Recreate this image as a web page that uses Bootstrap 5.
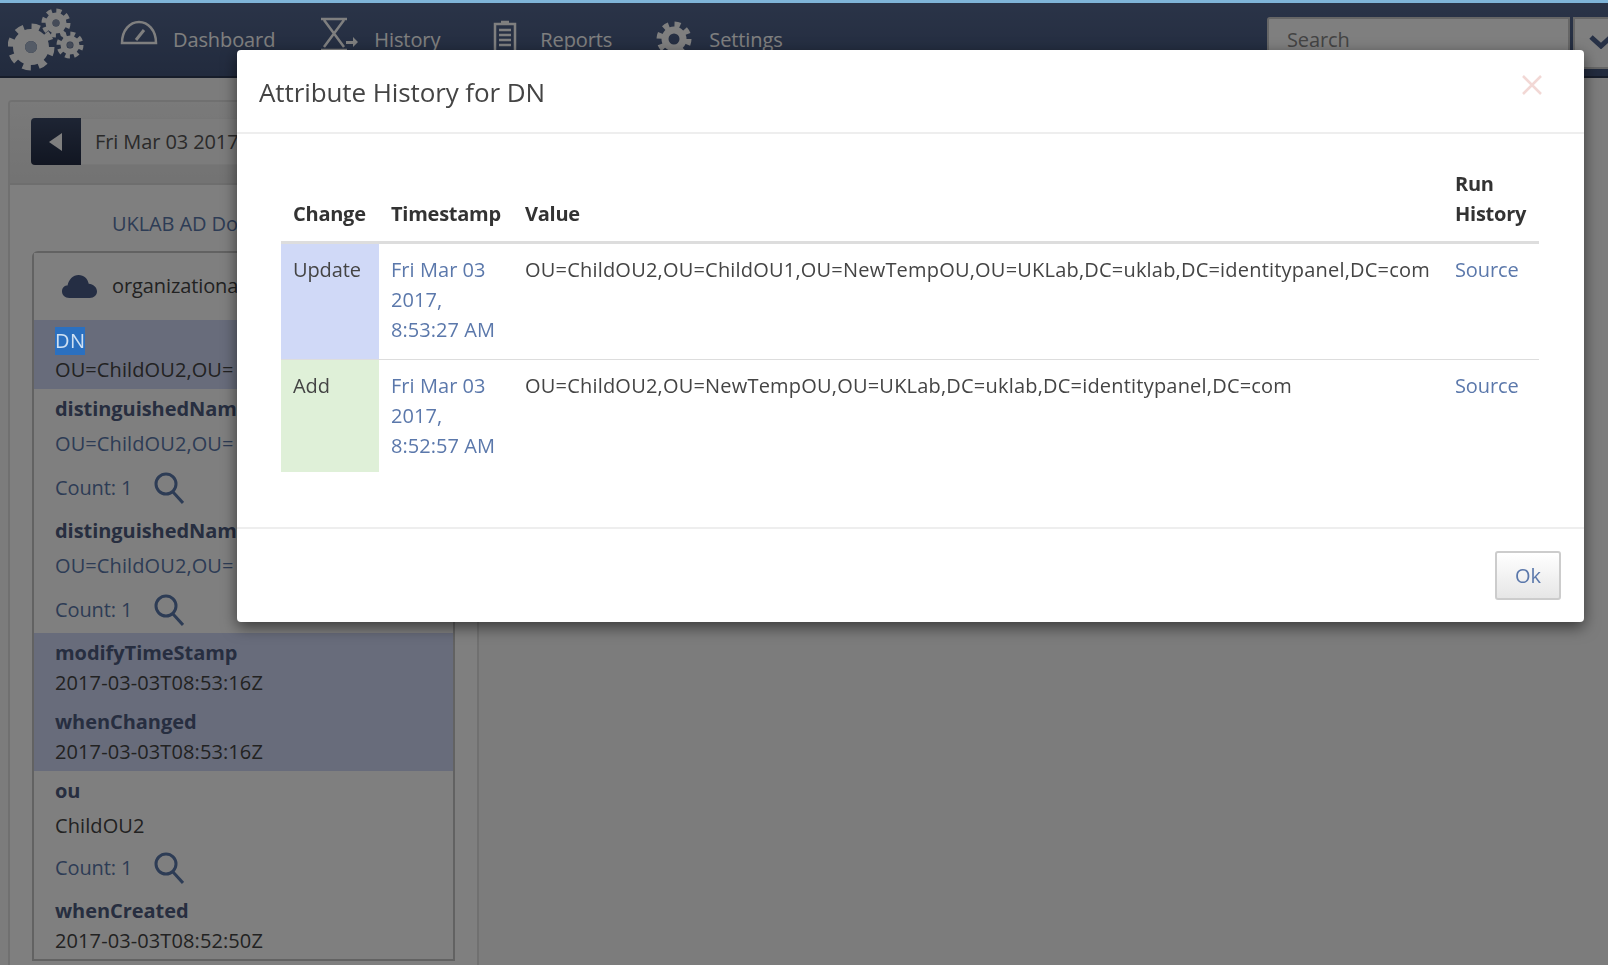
<!DOCTYPE html>
<html lang="en">
<head>
<meta charset="utf-8">
<title>Attribute History</title>
<link rel="stylesheet" href="https://cdn.jsdelivr.net/npm/bootstrap@5.3.0/dist/css/bootstrap.min.css">
<style>
html,body{height:965px;overflow:hidden}
body{font-family:"Open Sans","Liberation Sans",sans-serif;font-size:20px;line-height:30px;color:#444;background:#f8f8f8;letter-spacing:-.1px}
a{color:#5b78ab;text-decoration:none}
.top-strip{height:3px;background:#7fb4d8;position:relative;z-index:1060}
.app-bar{height:75px;background:linear-gradient(#556890,#44567c);border-bottom:2px solid #2e3a55;padding-left:8px;color:#fff}
.app-logo{width:76px;height:64px;margin-right:36px;margin-top:5px}
.app-link{color:#fff;display:flex;align-items:flex-start;height:60px;padding-top:22px}
.app-ico{flex:none;margin-right:15px;margin-top:-5px}
.search-box{position:absolute;left:1267px;top:14px;width:303px;height:52px;background:#fff;border:2px solid #ccc;border-radius:3px 0 0 3px;padding:6px 18px;color:#888}
.search-drop{position:absolute;left:1573px;top:14px;width:35px;height:52px;background:#fff;border:2px solid #ccc;border-right:0}
.main-area{padding:22px 0 0 8px}
.side-panel{width:471px;height:865px;background:#fff;border:2px solid #e0e0e0;border-bottom:0;border-radius:4px 4px 0 0;overflow:hidden}
.date-band{height:83px;background:linear-gradient(#f4f4f4,#e6e6e6);border-bottom:2px solid #ddd;padding:16px 21px}
.back-btn{width:50px;height:47px;background:linear-gradient(#3c4a68,#232c44);border:0;border-radius:4px 0 0 4px;padding:0}
.date-field{width:300px;height:47px;background:#f8f8f8;padding:8px 14px;color:#555;border:1px solid #eee;border-left:0;white-space:nowrap}
.dom-link{padding:24px 0 0 102px;height:66px;white-space:nowrap}
.obj-box{margin-left:22px;width:423px;border:2px solid #c4c4c4;border-bottom:0;border-radius:6px 6px 0 0}
.obj-head{height:67px;padding:18px 0 0 28px;background:#fff;white-space:nowrap}
.obj-head svg{margin-right:15px;margin-top:4px;vertical-align:top}
.attr-row{padding:5px 21px 4px;overflow:hidden;white-space:nowrap}
.attr-row.is-changed{background:#d0d9f7}
.attr-row.has-count{padding-bottom:8px}
.attr-row.tail{border-bottom:2px solid #c4c4c4;padding-bottom:3px}
.attr-name{font-weight:700;color:#4e5c80;letter-spacing:-.05px}
.attr-gap{margin-top:5px}
.attr-stamp{letter-spacing:.1px}
.attr-count{margin-top:14px;color:#5b78ab;height:30px;display:flex;align-items:center}
.attr-count.count-tight{margin-top:12px}
.attr-count svg{margin-left:22px}
.sel-wrap{height:30px;padding-top:2px;line-height:28px}
.sel-text{position:relative;z-index:1051;background:#2b70c0;color:#cfe0f2;display:inline-block;height:28px;line-height:28px;letter-spacing:.4px}
.modal-backdrop{top:3px;height:962px}
.hist-dialog{width:1347px;max-width:none;margin:50px 0 0 237px}
.hist-dialog .modal-content{border:0;border-radius:4px;box-shadow:0 5px 15px rgba(0,0,0,.55);height:572px}
.hist-dialog .modal-header{height:84px;padding:24px 22px;border-bottom:2px solid #eee;align-items:flex-start}
.hist-title{font-size:26px;line-height:36px;font-weight:400;color:#444;letter-spacing:-.1px;margin:0}
.hist-close{border:0;background:none;padding:0;position:absolute;left:1285px;top:25px;line-height:0}
.hist-dialog .modal-body{padding:30px 45px 0 44px;flex:none;height:393px}
.hist-table{table-layout:fixed;width:1258px;margin:0;--bs-table-color:#444;--bs-table-border-color:#ddd}
.hist-table th,.hist-table td{padding:11px 12px;line-height:30px}
.hist-table thead th{vertical-align:bottom;border-bottom:3px solid #ddd;color:#333;padding:5px 12px 12px;letter-spacing:-.25px}
.hist-table tbody td{border-bottom:1px solid #ddd}
.hist-table tbody tr:first-child td{padding-bottom:14px}
.hist-table tbody tr:last-child td{border-bottom:0}
.cw1{width:98px}.cw2{width:134px}.cw3{width:930px}.cw4{width:96px}
td.cell-update{--bs-table-bg:#d0d9f7;background:#d0d9f7}
td.cell-add{--bs-table-bg:#dff0d8;background:#dff0d8}
td.cell-stamp a{letter-spacing:.05px}
.hist-table td.cell-value{letter-spacing:.2px}
.hist-dialog .modal-footer{height:95px;padding:22px 23px;border-top:2px solid #eee;align-items:flex-start}
.ok-btn{width:66px;height:49px;margin:0;padding:0;background:linear-gradient(#fff,#e6e6e6);border:2px solid #ccc;border-radius:3px;color:#5b78ab;font-size:20px;letter-spacing:-.1px}
</style>
</head>
<body>
<div class="top-strip"></div>
<header class="app-bar d-flex align-items-start position-relative">
  <svg class="app-logo" viewBox="0 0 76 64" aria-hidden="true">
    <g fill="none" stroke="#fff">
      <circle cx="23" cy="39" r="20" stroke-width="7" stroke-dasharray="8 7.7"/>
      <circle cx="23" cy="39" r="12" stroke-width="12"/>
      <circle cx="48" cy="15" r="12" stroke-width="5" stroke-dasharray="5 4.42"/>
      <circle cx="48" cy="15" r="7" stroke-width="7"/>
      <circle cx="62" cy="37" r="11" stroke-width="5" stroke-dasharray="4.6 4.04"/>
      <circle cx="62" cy="37" r="6.5" stroke-width="6"/>
    </g>
    <circle cx="23" cy="39" r="6" fill="#a9b7cc"/>
    <circle cx="48" cy="15" r="3.5" fill="#8a97b0"/>
    <circle cx="62" cy="37" r="3" fill="#8a97b0"/>
  </svg>
  <nav class="d-flex">
    <a class="app-link" href="#" style="margin-right:45px">
      <svg class="app-ico" width="38" height="26" viewBox="0 0 38 26" fill="none" stroke="#fff" stroke-width="2.5"><path d="M2 23 C2 10 10 2 19 2 C28 2 36 10 36 23 Z"/><path d="M16 20 L24 10" stroke-width="3"/></svg>
      Dashboard</a>
    <a class="app-link" href="#" style="margin-right:53px">
      <svg class="app-ico" width="38" height="36" viewBox="0 0 38 36" fill="none" stroke="#fff" stroke-width="2.5" style="margin-top:-8px;margin-right:16px"><path d="M1 2 H27 M4 3 L24 30 M24 3 L4 30 M1 33 H27"/><path d="M26 24 H33 V20 L38 25 L33 30 V27 H26 Z" fill="#fff" stroke="none"/></svg>
      History</a>
    <a class="app-link" href="#" style="margin-right:44px">
      <svg class="app-ico" width="24" height="34" viewBox="0 0 24 34" fill="none" stroke="#fff" stroke-width="2.5" style="margin-top:-5px;margin-right:23px"><rect x="2" y="4" width="20" height="28"/><path d="M8 2 H16 M6 10 H18 M6 15 H18 M6 20 H18 M6 25 H18"/></svg>
      Reports</a>
    <a class="app-link" href="#">
      <svg class="app-ico" width="36" height="36" viewBox="0 0 36 36" fill="none" stroke="#fff" style="margin-top:-4px;margin-right:17px"><circle cx="18" cy="18" r="14.5" stroke-width="6" stroke-dasharray="5.7 5.7"/><circle cx="18" cy="18" r="9" stroke-width="7"/></svg>
      Settings</a>
  </nav>
  <div class="search-box">Search</div>
  <div class="search-drop"><svg width="24" height="14" viewBox="0 0 24 14" fill="none" stroke="#4f628c" stroke-width="5" style="margin:16px 0 0 14px;display:block"><path d="M2 2 L12 11 L24 0"/></svg></div>
</header>
<main class="main-area">
  <div class="side-panel">
    <div class="date-band d-flex">
      <button class="back-btn d-flex align-items-center justify-content-center" type="button" aria-label="Previous"><svg width="14" height="18" viewBox="0 0 14 18"><path d="M13 0 V18 L0 9 Z" fill="#fff"/></svg></button>
      <div class="date-field">Fri Mar 03 2017</div>
    </div>
    <div class="dom-link"><a href="#">UKLAB AD Domain</a></div>
    <div class="obj-box">
      <div class="obj-head">
        <svg width="35" height="23" viewBox="0 0 38 24" preserveAspectRatio="none"><path d="M8 24 C3 24 0 21 0 17 C0 13 3 11 6 11 C7 5 12 0 18 0 C24 0 28 4 29 9 C34 9 38 13 38 17 C38 21 35 24 30 24 Z" fill="#4a5c88"/></svg>organizationalUnit
      </div>
      <div class="attr-row is-changed"><div class="sel-wrap"><span class="sel-text">DN</span></div><div class="attr-stamp">OU=ChildOU2,OU=</div></div>
      <div class="attr-row has-count"><div class="attr-name">distinguishedName</div><div class="attr-gap attr-stamp"><a href="#">OU=ChildOU2,OU=</a></div>
        <div class="attr-count">Count: 1 <svg width="30" height="32" viewBox="0 0 30 32" fill="none" stroke="#5b78ab" stroke-width="3"><circle cx="12" cy="12" r="10"/><path d="M19 20 L29 31"/></svg></div></div>
      <div class="attr-row has-count"><div class="attr-name">distinguishedName</div><div class="attr-gap attr-stamp"><a href="#">OU=ChildOU2,OU=</a></div>
        <div class="attr-count">Count: 1 <svg width="30" height="32" viewBox="0 0 30 32" fill="none" stroke="#5b78ab" stroke-width="3"><circle cx="12" cy="12" r="10"/><path d="M19 20 L29 31"/></svg></div></div>
      <div class="attr-row is-changed"><div class="attr-name">modifyTimeStamp</div><div class="attr-stamp">2017-03-03T08:53:16Z</div></div>
      <div class="attr-row is-changed"><div class="attr-name">whenChanged</div><div class="attr-stamp">2017-03-03T08:53:16Z</div></div>
      <div class="attr-row has-count"><div class="attr-name">ou</div><div class="attr-gap attr-stamp">ChildOU2</div>
        <div class="attr-count count-tight">Count: 1 <svg width="30" height="32" viewBox="0 0 30 32" fill="none" stroke="#5b78ab" stroke-width="3"><circle cx="12" cy="12" r="10"/><path d="M19 20 L29 31"/></svg></div></div>
      <div class="attr-row tail"><div class="attr-name">whenCreated</div><div class="attr-stamp">2017-03-03T08:52:50Z</div></div>
    </div>
  </div>
</main>
<div class="modal-backdrop show"></div>
<div class="modal d-block" tabindex="-1" role="dialog">
  <div class="modal-dialog hist-dialog">
    <div class="modal-content">
      <div class="modal-header">
        <h5 class="hist-title">Attribute History for DN</h5>
        <button class="hist-close" type="button" aria-label="Close"><svg width="20" height="20" viewBox="0 0 20 20" fill="none" stroke="#f2d8d5" stroke-width="2.5"><path d="M1 1 L19 19 M19 1 L1 19"/></svg></button>
      </div>
      <div class="modal-body">
        <table class="table hist-table">
          <colgroup><col class="cw1"><col class="cw2"><col class="cw3"><col class="cw4"></colgroup>
          <thead><tr><th>Change</th><th>Timestamp</th><th>Value</th><th>Run History</th></tr></thead>
          <tbody>
            <tr><td class="cell-update">Update</td><td class="cell-stamp"><a href="#">Fri Mar 03 2017, 8:53:27 AM</a></td><td class="cell-value">OU=ChildOU2,OU=ChildOU1,OU=NewTempOU,OU=UKLab,DC=uklab,DC=identitypanel,DC=com</td><td><a href="#">Source</a></td></tr>
            <tr><td class="cell-add">Add</td><td class="cell-stamp"><a href="#">Fri Mar 03 2017, 8:52:57 AM</a></td><td class="cell-value">OU=ChildOU2,OU=NewTempOU,OU=UKLab,DC=uklab,DC=identitypanel,DC=com</td><td><a href="#">Source</a></td></tr>
          </tbody>
        </table>
      </div>
      <div class="modal-footer"><button class="btn ok-btn" type="button">Ok</button></div>
    </div>
  </div>
</div>
<script src="https://cdn.jsdelivr.net/npm/bootstrap@5.3.0/dist/js/bootstrap.bundle.min.js"></script>
</body>
</html>
